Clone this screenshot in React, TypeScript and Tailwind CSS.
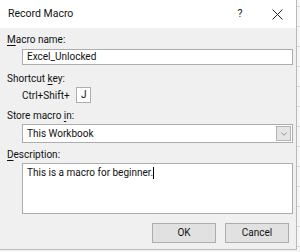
import { ChevronDown } from 'lucide-react';

// Faint spreadsheet grid peeking out behind the dialog
function SheetEdge() {
  const rows = [6, 26, 46, 66, 86, 106, 126, 146, 166, 186, 206, 226, 246];
  return (
    <div className="absolute inset-0 bg-[#f6f6f6]">
      {rows.map((y) => (
        <div key={y} className="absolute left-0 right-0 h-px bg-[#dadada]" style={{ top: y }} />
      ))}
    </div>
  );
}

function Label({ text, u, className = '' }: { text: string; u: number; className?: string }) {
  return (
    <div className={`h-[16px] leading-[16px] ${className}`}>
      {text.slice(0, u)}
      <span className="underline underline-offset-2">{text[u]}</span>
      {text.slice(u + 1)}
    </div>
  );
}

export default function App() {
  return (
    <div className="relative w-[300px] h-[252px] overflow-hidden font-['Roboto',sans-serif] text-[10px] text-[#111]">
      <SheetEdge />
      <div className="relative w-[297px] h-[250px] flex flex-col bg-[#f0f0f0] border-r border-b border-[#b9b9b9]">
        {/* Title bar */}
        <div className="h-[28px] bg-white flex items-center pl-[8px] text-[10.5px]">
          <span className="flex-1">Record Macro</span>
          <span className="w-[12px] text-center mr-[26px]">?</span>
          <svg width="11" height="11" viewBox="0 0 11 11" className="mr-[13px]">
            <path d="M0.5 0.5 L10.5 10.5 M10.5 0.5 L0.5 10.5" stroke="#222" strokeWidth="1" />
          </svg>
        </div>

        <div className="flex flex-col pl-[7px] pr-[4px]">
          <Label text="Macro name:" u={0} className="mt-[4px]" />
          <div className="mt-[1px] ml-[15px] w-[271px] h-[16px] bg-white border border-[#adadad] pl-[4px] leading-[14px]">
            Excel_Unlocked
          </div>

          <Label text="Shortcut key:" u={9} className="mt-[6px]" />
          <div className="ml-[15px] h-[16px] flex items-center">
            <span className="w-[54px]">Ctrl+Shift+</span>
            <div className="w-[15px] h-[16px] bg-white border border-[#adadad] pl-[4px] leading-[14px]">J</div>
          </div>

          <Label text="Store macro in:" u={12} className="mt-[5px]" />
          <div className="ml-[15px] w-[271px] h-[19px] bg-white border border-[#adadad] flex items-center pl-[4px] pr-px">
            <span className="flex-1">This Workbook</span>
            <div className="w-[15px] h-[15px] bg-[#e5e5e5] border border-[#b4b4b4] flex items-center justify-center">
              <ChevronDown size={10} strokeWidth={1.5} color="#606060" />
            </div>
          </div>

          <Label text="Description:" u={0} className="mt-[4px]" />
          <div className="ml-[15px] w-[271px] h-[51px] bg-white border border-[#adadad] pl-[4px] pt-[1px] leading-[16px]">
            This is a macro for beginner.<span className="inline-block w-px h-[12px] bg-black align-middle" />
          </div>

          <div className="mt-[9px] flex justify-end gap-[9px] pr-[3px]">
            <button className="w-[64px] h-[20px] bg-[#e1e1e1] border border-[#adadad] leading-[18px]">OK</button>
            <button className="w-[64px] h-[20px] bg-[#e1e1e1] border border-[#adadad] leading-[18px]">Cancel</button>
          </div>
        </div>
      </div>
    </div>
  );
}
